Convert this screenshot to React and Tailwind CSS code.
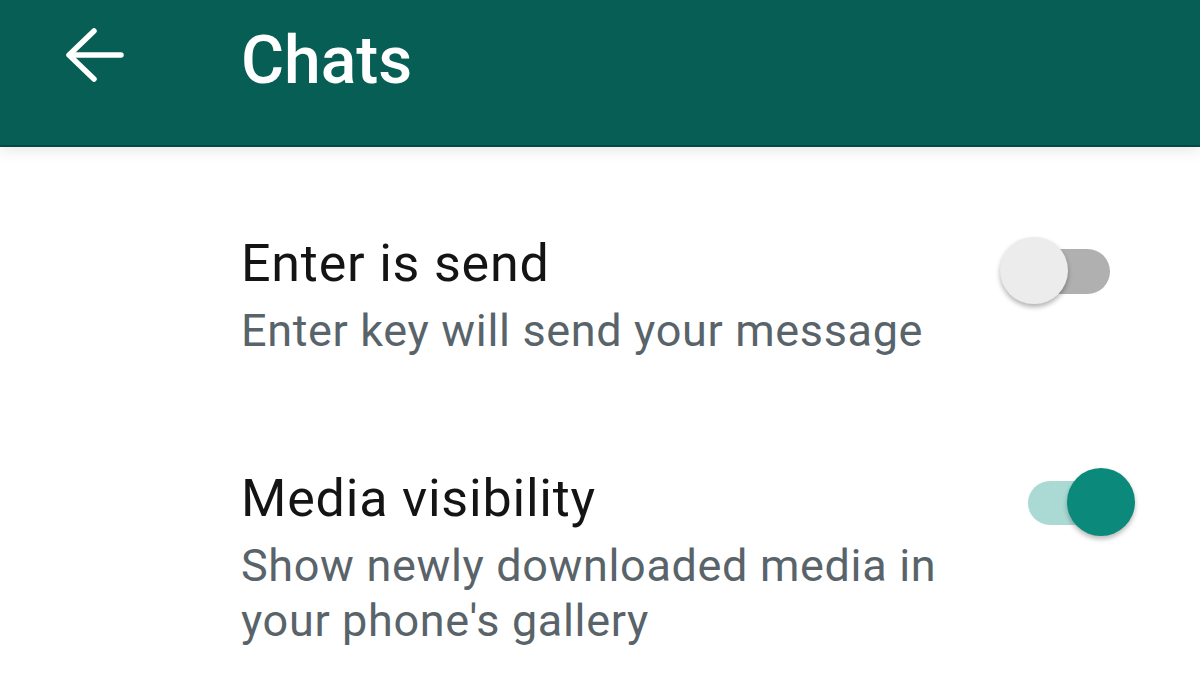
import React from "react";

function BackArrow() {
  return (
    <svg width="60" height="56" viewBox="0 0 60 56" fill="none" className="shrink-0">
      <path d="M56 28H6" stroke="white" strokeWidth="5.5" strokeLinecap="round" />
      <path d="M29 4L4 28L29 52" stroke="white" strokeWidth="5.5" strokeLinecap="round" strokeLinejoin="round" />
    </svg>
  );
}

function Toggle({ on }) {
  return (
    <div className="relative w-[135px] h-[68px] shrink-0">
      <div
        className={
          on
            ? "absolute left-[28px] top-[13px] w-[82px] h-[44px] rounded-full bg-[#abdad5]"
            : "absolute left-[28px] top-[12px] w-[82px] h-[45px] rounded-full bg-[#b0b0b0]"
        }
      />
      <div
        className={
          on
            ? "absolute left-[67px] top-0 w-[68px] h-[68px] rounded-full bg-[#0b8a7b] shadow-[0_3px_5px_rgba(0,0,0,0.28)]"
            : "absolute left-0 top-0 w-[68px] h-[67px] rounded-full bg-[#ececec] shadow-[0_3px_5px_rgba(0,0,0,0.3)]"
        }
      />
    </div>
  );
}

function SettingRow({ title, subtitle, on, toggleTop }) {
  return (
    <div className="flex items-start">
      <div className="flex-1 min-w-0">
        <div className="text-[52px] leading-[60px] tracking-[0.8px] text-[#141414]">{title}</div>
        <div className="mt-[9px] text-[45px] leading-[55px] tracking-[0.65px] text-[#59636a] w-[720px]">
          {subtitle}
        </div>
      </div>
      <div className={toggleTop}>
        <Toggle on={on} />
      </div>
    </div>
  );
}

export default function App() {
  return (
    <div
      className="w-[1200px] h-[675px] overflow-hidden bg-white relative"
      style={{ fontFamily: "Roboto, 'Noto Sans', sans-serif" }}
    >
      <header className="h-[147px] bg-[#075e54] border-b-2 border-[#054a42] flex items-start pt-[27px] relative z-10 shadow-[0_3px_14px_rgba(0,0,0,0.1)]">
        <div className="w-[241px] pl-[65px]">
          <BackArrow />
        </div>
        <h1 className="text-[66px] leading-[68px] font-medium text-white">Chats</h1>
      </header>
      <main className="pl-[241px] pr-[65px] pt-[87px] flex flex-col gap-[111px]">
        <SettingRow
          title="Enter is send"
          subtitle="Enter key will send your message"
          on={false}
          toggleTop="mt-[3px]"
        />
        <SettingRow
          title="Media visibility"
          subtitle="Show newly downloaded media in your phone's gallery"
          on={true}
          toggleTop="-mt-[1px]"
        />
      </main>
    </div>
  );
}
